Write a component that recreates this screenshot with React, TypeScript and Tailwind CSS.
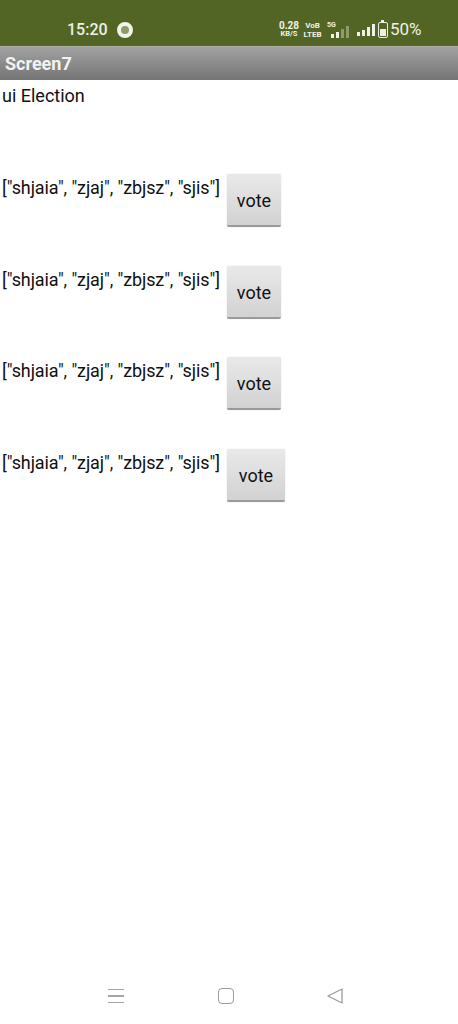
const label = '["shjaia", "zjaj", "zbjsz", "sjis"]';

function SignalBars({ bars, dim = 0 }: { bars: number[]; dim?: number }) {
  return (
    <div className="flex items-end gap-[2px]">
      {bars.map((h, i) => (
        <span
          key={i}
          className={i >= bars.length - dim ? 'w-[3px] bg-[#8d9c6a]' : 'w-[3px] bg-[#f0f2e8]'}
          style={{ height: h }}
        />
      ))}
    </div>
  );
}

function VoteRow({ wide }: { wide?: boolean }) {
  return (
    <div className="flex items-start h-[53px]">
      <div className="w-[227px] pl-[2px] pt-[3px] text-[18px] leading-[22px] tracking-[-0.1px] text-[#111] whitespace-nowrap">
        {label}
      </div>
      <button
        className={
          (wide ? 'w-[58px] ' : 'w-[54px] ') +
          'h-[53px] pt-[2px] rounded-[2px] bg-gradient-to-b from-[#e9e9e9] to-[#d2d2d2] border-b-2 border-[#9a9a9a] shadow-[0_0_1px_rgba(0,0,0,0.3)] text-[18px] text-[#111] flex items-center justify-center'
        }
      >
        vote
      </button>
    </div>
  );
}

export default function App() {
  return (
    <div className="w-[458px] h-[1024px] bg-white flex flex-col overflow-hidden antialiased font-['Roboto',sans-serif]">
      {/* status bar */}
      <div className="h-[46px] bg-[#536524] flex items-center pt-[13px] text-[#eef0e4]">
        <span className="ml-[67px] w-[41px] text-[16px] font-medium leading-none">15:20</span>
        <span className="ml-[9px] w-[16px] h-[16px] rounded-full border-[4.5px] border-[#f2f3ea] bg-[#8d9c6a]" />
        <div className="ml-[145px] w-[22px] flex flex-col items-center font-bold">
          <span className="text-[10px] leading-[9px]">0.28</span>
          <span className="text-[7.5px] leading-[8px]">KB/S</span>
        </div>
        <div className="ml-[4px] w-[17px] flex flex-col items-center text-[8px] font-bold leading-[9px]">
          <span>VoB</span>
          <span>LTEB</span>
        </div>
        <div className="ml-[5px] relative w-[23px] h-[16px] flex items-end justify-end">
          <span className="absolute left-[1px] top-0 text-[7px] font-bold leading-[7px]">5G</span>
          <SignalBars bars={[4, 6, 9, 12]} dim={2} />
        </div>
        <div className="ml-[8px]">
          <SignalBars bars={[4, 6, 9, 12]} />
        </div>
        <div className="ml-[3px] relative w-[10px] h-[16px] rounded-[2px] border-[1.5px] border-[#eef0e4] flex items-end p-[1px]">
          <span className="absolute -top-[3px] left-[2px] w-[3px] h-[2px] bg-[#eef0e4]" />
          <span className="w-full h-[7px] bg-[#eef0e4]" />
        </div>
        <span className="ml-[2px] text-[17px] leading-none">50%</span>
      </div>

      {/* title bar */}
      <div className="h-[34px] bg-gradient-to-b from-[#a2a2a2] to-[#757575] border-t border-[#b0b0a4] flex items-center pl-[5px]">
        <span className="text-[18px] font-bold text-[#f2f2f2]">Screen7</span>
      </div>

      {/* content */}
      <div className="pl-[2px] pt-[5px] text-[18px] leading-[22px] text-[#111]">ui Election</div>
      <div className="mt-[67px] flex flex-col gap-[38.5px]">
        <VoteRow />
        <VoteRow />
        <VoteRow />
        <VoteRow wide />
      </div>

      {/* nav bar */}
      <div className="mt-auto mb-[19px] h-[18px] flex items-center">
        <div className="ml-[108px] w-[16px] flex flex-col gap-[5px]">
          <span className="h-[1.5px] bg-[#a5a5a5]" />
          <span className="h-[1.5px] bg-[#a5a5a5]" />
          <span className="h-[1.5px] bg-[#a5a5a5]" />
        </div>
        <div className="ml-[94px] w-[16px] h-[16px] rounded-[4px] border-[1.5px] border-[#9b9b9b]" />
        <svg className="ml-[93px]" width="16" height="16" viewBox="0 0 16 16" fill="none" stroke="#9b9b9b" strokeWidth="1.3" strokeLinejoin="round">
          <path d="M15 1 L1 8 L15 15 Z" />
        </svg>
      </div>
    </div>
  );
}
